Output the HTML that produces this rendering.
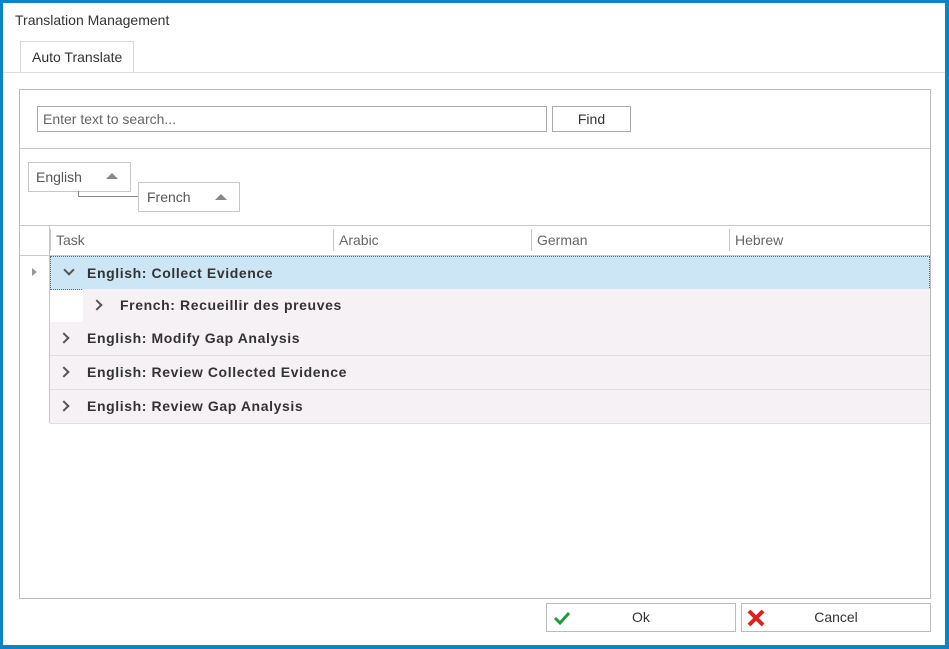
<!DOCTYPE html>
<html><head><style>
*{box-sizing:border-box;margin:0;padding:0}
body{width:949px;height:649px;background:#0a84c6;font-family:"Liberation Sans",sans-serif;font-size:14px;color:#333;position:relative;overflow:hidden}
.win{position:absolute;left:3px;top:3px;width:942px;height:642px;background:#fff}
.a{position:absolute}
.box{position:absolute;border:1px solid #c8c8c8;background:#fff}
.row{position:absolute;height:34px;background:#f6f1f5;border-bottom:1px solid #e2dde2;font-weight:bold;font-size:14px;color:#333;line-height:32px;letter-spacing:0.6px}
.chev{position:absolute;width:8px;height:8px;border-right:2px solid #555;border-bottom:2px solid #555;transform:rotate(-45deg)}
.down{transform:rotate(45deg)}
.tri{position:absolute;width:0;height:0;border-left:6px solid transparent;border-right:6px solid transparent;border-bottom:6px solid #888}
.hd{position:absolute;top:229px;height:22px;border-left:1px solid #c8c8c8;padding-left:5px;line-height:22px;color:#666;font-size:14px}
</style></head><body>
<div class="win"></div>
<div class="a" style="left:15px;top:12px;font-size:14px;color:#333">Translation Management</div>
<div class="box" style="left:20px;top:41px;width:114px;height:31px;border-color:#d8d8d8;border-bottom:none;line-height:30px;padding-left:11px;color:#333">Auto Translate</div>
<div class="a" style="left:3px;top:72px;width:942px;height:1px;background:#ddd"></div>
<div class="box" style="left:19px;top:89px;width:912px;height:510px;border-color:#bbb"></div>
<div class="box" style="left:37px;top:106px;width:510px;height:26px;border-color:#aaa;line-height:24px;padding-left:5px;color:#666">Enter text to search...</div>
<div class="box" style="left:552px;top:106px;width:79px;height:26px;border-color:#aaa;line-height:24px;text-align:center;color:#333">Find</div>
<div class="a" style="left:20px;top:148px;width:910px;height:1px;background:#c8c8c8"></div>
<div class="box" style="left:28px;top:162px;width:103px;height:30px;line-height:28px;padding-left:7px;color:#555">English</div>
<div class="tri" style="left:106px;top:173px"></div>
<div class="a" style="left:78px;top:191px;width:1px;height:6px;background:#888"></div>
<div class="a" style="left:78px;top:196px;width:61px;height:1px;background:#888"></div>
<div class="box" style="left:138px;top:182px;width:102px;height:30px;line-height:28px;padding-left:8px;color:#555">French</div>
<div class="tri" style="left:215px;top:194px"></div>
<div class="a" style="left:20px;top:225px;width:910px;height:1px;background:#c8c8c8"></div>
<div class="a" style="left:49px;top:226px;width:1px;height:197px;background:#c8c8c8"></div>
<div class="hd" style="left:50px">Task</div>
<div class="hd" style="left:333px">Arabic</div>
<div class="hd" style="left:531px">German</div>
<div class="hd" style="left:729px">Hebrew</div>
<div class="a" style="left:20px;top:255px;width:910px;height:1px;background:#c8c8c8"></div>
<div class="a" style="left:32px;top:268px;width:0;height:0;border-top:4px solid transparent;border-bottom:4px solid transparent;border-left:5px solid #999"></div>
<div class="row" style="left:50px;top:256px;width:880px;background:#cde6f5;border:1px dotted #666;padding-left:36px"><span class="chev down" style="left:14px;top:9px"></span>English: Collect Evidence</div>
<div class="row" style="left:83px;top:289px;width:847px;padding-left:37px"><span class="chev" style="left:10px;top:12px"></span>French: Recueillir des preuves</div>
<div class="row" style="left:50px;top:322px;width:880px;padding-left:37px"><span class="chev" style="left:10px;top:12px"></span>English: Modify Gap Analysis</div>
<div class="row" style="left:50px;top:356px;width:880px;padding-left:37px"><span class="chev" style="left:10px;top:12px"></span>English: Review Collected Evidence</div>
<div class="row" style="left:50px;top:390px;width:880px;padding-left:37px"><span class="chev" style="left:10px;top:12px"></span>English: Review Gap Analysis</div>
<div class="box" style="left:546px;top:603px;width:190px;height:29px;border-color:#bbb;line-height:27px;text-align:center;color:#333">Ok
<svg class="a" style="left:6px;top:6px" width="18" height="16" viewBox="0 0 18 16"><path d="M2 8 L7 13 L16 3" fill="none" stroke="#1f9a3a" stroke-width="3"/></svg></div>
<div class="box" style="left:741px;top:603px;width:190px;height:29px;border-color:#bbb;line-height:27px;text-align:center;color:#333">Cancel
<svg class="a" style="left:5px;top:5px" width="18" height="18" viewBox="0 0 18 18"><path d="M2 2 L16 16 M16 2 L2 16" stroke="#e0201e" stroke-width="4"/></svg></div>
</body></html>
